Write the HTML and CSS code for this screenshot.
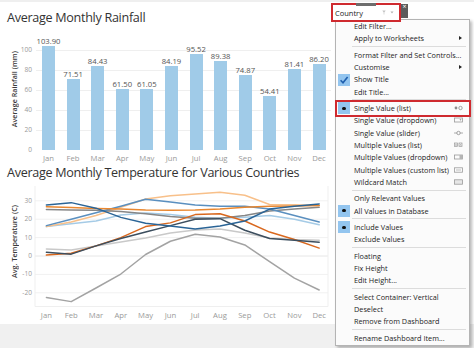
FILE: index.html
```html
<!DOCTYPE html>
<html>
<head>
<meta charset="utf-8">
<title>Dashboard</title>
<link rel="stylesheet" href="styles.css">
</head>
<body>
<div class="dash">
  <div class="topband"></div>

  <section class="sheet rain">
    <h1 class="sheet-title">Average Monthly Rainfall</h1>
    <div class="chart">
      <div class="ytitle"><span>Average Rainfall (mm)</span></div>
      <div class="yticks"><span>100</span><span>80</span><span>60</span><span>40</span><span>20</span><span>0</span></div>
      <div class="bars">
        <div class="col"><span class="val">103.90</span><div class="bar" style="height:103.9px"></div></div>
        <div class="col"><span class="val">71.51</span><div class="bar" style="height:71.51px"></div></div>
        <div class="col"><span class="val">84.43</span><div class="bar" style="height:84.43px"></div></div>
        <div class="col"><span class="val">61.50</span><div class="bar" style="height:61.5px"></div></div>
        <div class="col"><span class="val">61.05</span><div class="bar" style="height:61.05px"></div></div>
        <div class="col"><span class="val">84.19</span><div class="bar" style="height:84.19px"></div></div>
        <div class="col"><span class="val">95.52</span><div class="bar" style="height:95.52px"></div></div>
        <div class="col"><span class="val">89.38</span><div class="bar" style="height:89.38px"></div></div>
        <div class="col"><span class="val">74.87</span><div class="bar" style="height:74.87px"></div></div>
        <div class="col"><span class="val">54.41</span><div class="bar" style="height:54.41px"></div></div>
        <div class="col"><span class="val">81.41</span><div class="bar" style="height:81.41px"></div></div>
        <div class="col"><span class="val">86.20</span><div class="bar" style="height:86.2px"></div></div>
      </div>
      <div class="xticks"><span>Jan</span><span>Feb</span><span>Mar</span><span>Apr</span><span>May</span><span>Jun</span><span>Jul</span><span>Aug</span><span>Sep</span><span>Oct</span><span>Nov</span><span>Dec</span></div>
    </div>
  </section>

  <section class="sheet temp">
    <h1 class="sheet-title">Average Monthly Temperature for Various Countries</h1>
    <div class="chart">
      <div class="ytitle"><span>Avg. Temperature (C)</span></div>
      <div class="yticks"><span>30</span><span>20</span><span>10</span><span>0</span><span>-10</span><span>-20</span></div>
      <svg class="lines" width="297.6" height="121" viewBox="0 0 297.6 121">
        <g class="grid">
          <line x1="1" y1="14.8" x2="294" y2="14.8"/>
          <line x1="1" y1="33.2" x2="294" y2="33.2"/>
          <line x1="1" y1="51.6" x2="294" y2="51.6"/>
          <line x1="1" y1="88.4" x2="294" y2="88.4"/>
          <line x1="1" y1="106.8" x2="294" y2="106.8"/>
        </g>
        <line class="zero" x1="1" y1="70" x2="294" y2="70"/>
        <g class="frame">
          <line x1="1" y1="0" x2="1" y2="120.5"/>
          <line x1="1" y1="120.5" x2="294" y2="120.5"/>
          <line x1="294" y1="0" x2="294" y2="120.5"/>
        </g>
        <g class="series" fill="none" stroke-width="1.5" stroke-linejoin="round" stroke-linecap="round">
          <polyline stroke="#c9c9c9" points="12.4,63.01 37.2,63.93 62,60.06 86.8,56.02 111.6,51.97 136.4,47 161.2,44.06 186,42.95 210.8,47 235.6,51.97 260.4,53.44 285.2,54.36"/>
          <polyline stroke="#a5cbe6" points="12.4,40.56 37.2,37.8 62,35.04 86.8,28.97 111.6,26.94 136.4,28.6 161.2,31.36 186,32.28 210.8,31.36 235.6,29.52 260.4,33.2 285.2,38.72"/>
          <polyline stroke="#f8c08a" points="12.4,40.56 37.2,35.96 62,29.52 86.8,21.24 111.6,12.96 136.4,9.65 161.2,8 186,6.15 210.8,9.28 235.6,18.48 260.4,18.85 285.2,19.4"/>
          <polyline stroke="#a3a3a3" points="12.4,111.4 37.2,115.63 62,102.02 86.8,88.03 111.6,68.53 136.4,55.28 161.2,48.29 186,51.05 210.8,58.96 235.6,75.52 260.4,92.08 285.2,104.04"/>
          <polyline stroke="#868686" points="12.4,23.45 37.2,24 62,24.37 86.8,25.47 111.6,27.68 136.4,30.44 161.2,32.28 186,32.28 210.8,29.52 235.6,24.92 260.4,23.08 285.2,21.24"/>
          <polyline stroke="#5a8fbf" points="12.4,39.64 37.2,33.2 62,26.76 86.8,20.32 111.6,13.33 136.4,16.09 161.2,19.03 186,20.32 210.8,20.32 235.6,23.08 260.4,29.52 285.2,35.96"/>
          <polyline stroke="#e9872f" points="12.4,20.69 37.2,21.61 62,22.53 86.8,23.08 111.6,24 136.4,24.37 161.2,24 186,23.08 210.8,21.24 235.6,20.32 260.4,19.95 285.2,19.4"/>
          <polyline stroke="#d9681e" points="12.4,69.08 37.2,67.24 62,59.88 86.8,51.6 111.6,40.56 136.4,36.88 161.2,28.6 186,27.68 210.8,35.04 235.6,46.08 260.4,53.44 285.2,62.09"/>
          <polyline stroke="#3c4e5e" points="12.4,66.32 37.2,68.16 62,59.88 86.8,52.52 111.6,46.08 136.4,39.64 161.2,33.2 186,32.65 210.8,44.24 235.6,52.52 260.4,54.36 285.2,56.2"/>
          <polyline stroke="#2a6496" points="12.4,19.03 37.2,16.64 62,22.16 86.8,31.36 111.6,37.25 136.4,40.01 161.2,42.95 186,40.01 210.8,35.04 235.6,23.08 260.4,20.32 285.2,17.93"/>
        </g>
      </svg>
      <div class="xticks"><span>Jan</span><span>Feb</span><span>Mar</span><span>Apr</span><span>May</span><span>Jun</span><span>Jul</span><span>Aug</span><span>Sep</span><span>Oct</span><span>Nov</span><span>Dec</span></div>
    </div>
  </section>

  <div class="footer"></div>
</div>

<div class="filter">
  <div class="filter-head">
    <span class="grip"></span>
    <span class="fname">Country</span>
    <span class="ficons">
      <svg width="4" height="5" viewBox="0 0 4 5"><path d="M0.3 0.5 H3.7 L2.3 2.4 V4.5 H1.7 V2.4 Z" fill="#c4c4c4"/></svg>
      <svg width="4" height="5" viewBox="0 0 4 5"><path d="M0.5 1.5 L2 3.5 L3.5 1.5 Z" fill="#b0b0b0"/></svg>
    </span>
  </div>
  <span class="fclose">×</span>

  <ul class="menu">
    <li class="mi">Edit Filter...</li>
    <li class="mi">Apply to Worksheets<span class="arr"></span></li>
    <li class="sep"></li>
    <li class="mi">Format Filter and Set Controls...</li>
    <li class="mi">Customise<span class="arr"></span></li>
    <li class="mi"><span class="mk"><svg width="12" height="12" viewBox="0 0 12 12"><polyline points="2.6,6.3 5,8.8 9.6,3" fill="none" stroke="#1f5fae" stroke-width="1.6"/></svg></span>Show Title</li>
    <li class="mi">Edit Title...</li>
    <li class="sep"></li>
    <li class="mi hl"><span class="mk"><i class="dot"></i></span>Single Value (list)<span class="ic"><svg width="9" height="6" viewBox="0 0 9 6"><circle cx="2" cy="3" r="1.4" fill="#8c8c8c"/><circle cx="6.5" cy="3" r="1.7" fill="none" stroke="#8c8c8c" stroke-width="0.8"/></svg></span></li>
    <li class="mi">Single Value (dropdown)<span class="ic"><svg width="9" height="6" viewBox="0 0 9 6"><rect x="0.5" y="1" width="8" height="4" fill="none" stroke="#9a9a9a" stroke-width="0.8"/><path d="M5.5 2.3 L7.5 2.3 L6.5 3.7 Z" fill="#8c8c8c"/></svg></span></li>
    <li class="mi">Single Value (slider)<span class="ic"><svg width="9" height="6" viewBox="0 0 9 6"><line x1="0" y1="3" x2="9" y2="3" stroke="#9a9a9a" stroke-width="0.8"/><circle cx="4.5" cy="3" r="1.7" fill="#fbfbfb" stroke="#8c8c8c" stroke-width="0.8"/></svg></span></li>
    <li class="mi">Multiple Values (list)<span class="ic"><svg width="9" height="6" viewBox="0 0 9 6"><rect x="0.5" y="1" width="3" height="3.5" fill="none" stroke="#9a9a9a" stroke-width="0.7"/><rect x="5" y="1" width="3" height="3.5" fill="none" stroke="#9a9a9a" stroke-width="0.7"/><path d="M1 1.5 L3 4 M3 1.5 L1 4 M5.5 1.5 L7.5 4 M7.5 1.5 L5.5 4" stroke="#9a9a9a" stroke-width="0.5"/></svg></span></li>
    <li class="mi">Multiple Values (dropdown)<span class="ic"><svg width="9" height="6" viewBox="0 0 9 6"><rect x="0.5" y="1" width="8" height="4" fill="none" stroke="#9a9a9a" stroke-width="0.8"/><rect x="5.5" y="1" width="3" height="4" fill="#b5b5b5"/></svg></span></li>
    <li class="mi">Multiple Values (custom list)<span class="ic"><svg width="9" height="6" viewBox="0 0 9 6"><rect x="0.5" y="0.8" width="8" height="4.4" fill="none" stroke="#9a9a9a" stroke-width="0.8"/><line x1="2" y1="3" x2="7" y2="3" stroke="#b0b0b0" stroke-width="0.8"/></svg></span></li>
    <li class="mi">Wildcard Match<span class="ic"><svg width="9" height="6" viewBox="0 0 9 6"><rect x="0.5" y="0.8" width="8" height="4.4" fill="#e6e6e6" stroke="#9a9a9a" stroke-width="0.8"/></svg></span></li>
    <li class="sep"></li>
    <li class="mi">Only Relevant Values</li>
    <li class="mi"><span class="mk"><i class="dot"></i></span>All Values in Database</li>
    <li class="sep"></li>
    <li class="mi"><span class="mk"><i class="dot"></i></span>Include Values</li>
    <li class="mi">Exclude Values</li>
    <li class="sep"></li>
    <li class="mi">Floating</li>
    <li class="mi">Fix Height</li>
    <li class="mi">Edit Height...</li>
    <li class="sep"></li>
    <li class="mi">Select Container: Vertical</li>
    <li class="mi">Deselect</li>
    <li class="mi">Remove from Dashboard</li>
    <li class="sep"></li>
    <li class="mi">Rename Dashboard Item...</li>
  </ul>
</div>
</body>
</html>
```

FILE: styles.css
```css
* { box-sizing: border-box; margin: 0; padding: 0; }
html, body { width: 474px; height: 348px; overflow: hidden; background: #fff; }
body { position: relative; font-family: "Open Sans", "Noto Sans", sans-serif; color: #333; }

.dash { width: 474px; height: 348px; display: flex; flex-direction: column; }
.topband { height: 2px; background: #efefef; flex: none; }

.sheet-title {
  font-size: 12.6px; line-height: 16px; font-weight: 400; color: #333;
  padding-left: 7px; letter-spacing: -0.3px; white-space: nowrap;
}
.rain .sheet-title { margin-top: 8px; }

.chart { display: grid; }
.rain .chart { margin-top: 7px; grid-template-columns: 19px 17.2px 295.2px; grid-template-rows: 117px 15px; }
.temp .chart { margin-top: 5px; grid-template-columns: 19px 15px 297.6px; grid-template-rows: 121px 16px; }

.ytitle {
  grid-row: 1; grid-column: 1;
  display: flex; align-items: center; justify-content: center;
  padding-left: 8px;
}
.ytitle span {
  writing-mode: vertical-rl; transform: rotate(180deg);
  font-size: 7.2px; font-weight: 600; color: #3a3a3a; white-space: nowrap;
}
.rain .ytitle { padding-bottom: 4px; }
.temp .ytitle { padding-bottom: 10px; }

.yticks {
  grid-row: 1 / span 2; grid-column: 2;
  display: flex; flex-direction: column; align-items: flex-end;
  font-size: 6.6px; color: #9a9a9a;
}
.rain .yticks { padding-top: 7px; padding-right: 4.2px; }
.rain .yticks span { height: 20px; line-height: 20px; }
.temp .yticks { padding-top: 5.8px; padding-right: 2px; }
.temp .yticks span { height: 18.4px; line-height: 18.4px; }

.bars {
  grid-row: 1; grid-column: 3;
  display: flex; align-items: flex-end;
  background-image: linear-gradient(to bottom, #efefef 1px, transparent 1px);
  background-size: 100% 20px;
  background-position: 0 17px;
}
.col { flex: 1; display: flex; flex-direction: column; align-items: center; }
.val { font-size: 7.7px; line-height: 10px; color: #555; white-space: nowrap; }
.bar { width: 13px; background: #a0cbe8; }

.xticks {
  grid-row: 2; grid-column: 3;
  display: flex; padding-top: 1px;
  font-size: 7.7px; line-height: 14px; color: #9a9a9a;
}
.xticks span { flex: 1; text-align: center; }

.lines { grid-row: 1; grid-column: 3; display: block; overflow: visible; }
.lines .grid line { stroke: #f1f1f1; stroke-width: 1; }
.lines .zero { stroke: #e6e6e6; stroke-width: 1; }
.lines .frame line { stroke: #efefef; stroke-width: 1; }

.footer { margin-top: 1px; flex: 1; background: #f0f0f0; }

/* filter card + context menu overlay */
.filter { position: absolute; left: 331px; top: 3px; }
.filter-head {
  position: relative; z-index: 3;
  width: 70px; height: 19px;
  border: 2px solid #cf2a2f; background: #fff;
  display: flex; align-items: center; padding-left: 2px;
}
.grip { position: absolute; left: 23px; top: -2px; width: 20px; height: 3px; background: #6d6d6d; }
.fname { font-size: 7.5px; color: #222; line-height: 10px; }
.ficons { margin-left: auto; margin-right: 5px; display: flex; gap: 4px; align-items: center; }
.ficons svg { display: block; }
.fclose {
  position: absolute; z-index: 3; left: 70px; top: 1px;
  width: 7px; height: 14px; background: #5b5b5b;
  color: #fff; font-size: 7px; line-height: 6px; text-align: center;
}

.menu {
  position: absolute; z-index: 2; left: 4px; top: 16px; width: 135px;
  list-style: none; background: #fbfbfb;
  border: 1px solid #b4b4b4;
  box-shadow: 2px 2px 3px rgba(0,0,0,0.28);
  padding: 0 0 1px;
}
.mi {
  position: relative; height: 12.33px;
  display: flex; align-items: center;
  padding-left: 18px; padding-right: 6px;
  font-size: 7.3px; color: #1b1b1b; white-space: nowrap;
}
.sep { height: 1px; margin: 1.5px 3px 1.5px 16px; background: #dcdcdc; }
.mk {
  position: absolute; left: 2px; top: 0.2px; width: 12px; height: 12px;
  background: #93c5ef; display: flex; align-items: center; justify-content: center;
}
.mk svg { display: block; }
.dot { display: block; width: 3.2px; height: 3.2px; border-radius: 50%; background: #111; }
.arr {
  margin-left: auto; margin-right: 1px; width: 0; height: 0;
  border-left: 3px solid #222; border-top: 2.5px solid transparent; border-bottom: 2.5px solid transparent;
}
.ic { margin-left: auto; display: flex; }
.ic svg { display: block; }
.hl::after {
  content: ""; position: absolute; left: -1px; right: -2px; top: -2.3px; bottom: -2.3px;
  border: 2px solid #cf2a2f;
}
```
